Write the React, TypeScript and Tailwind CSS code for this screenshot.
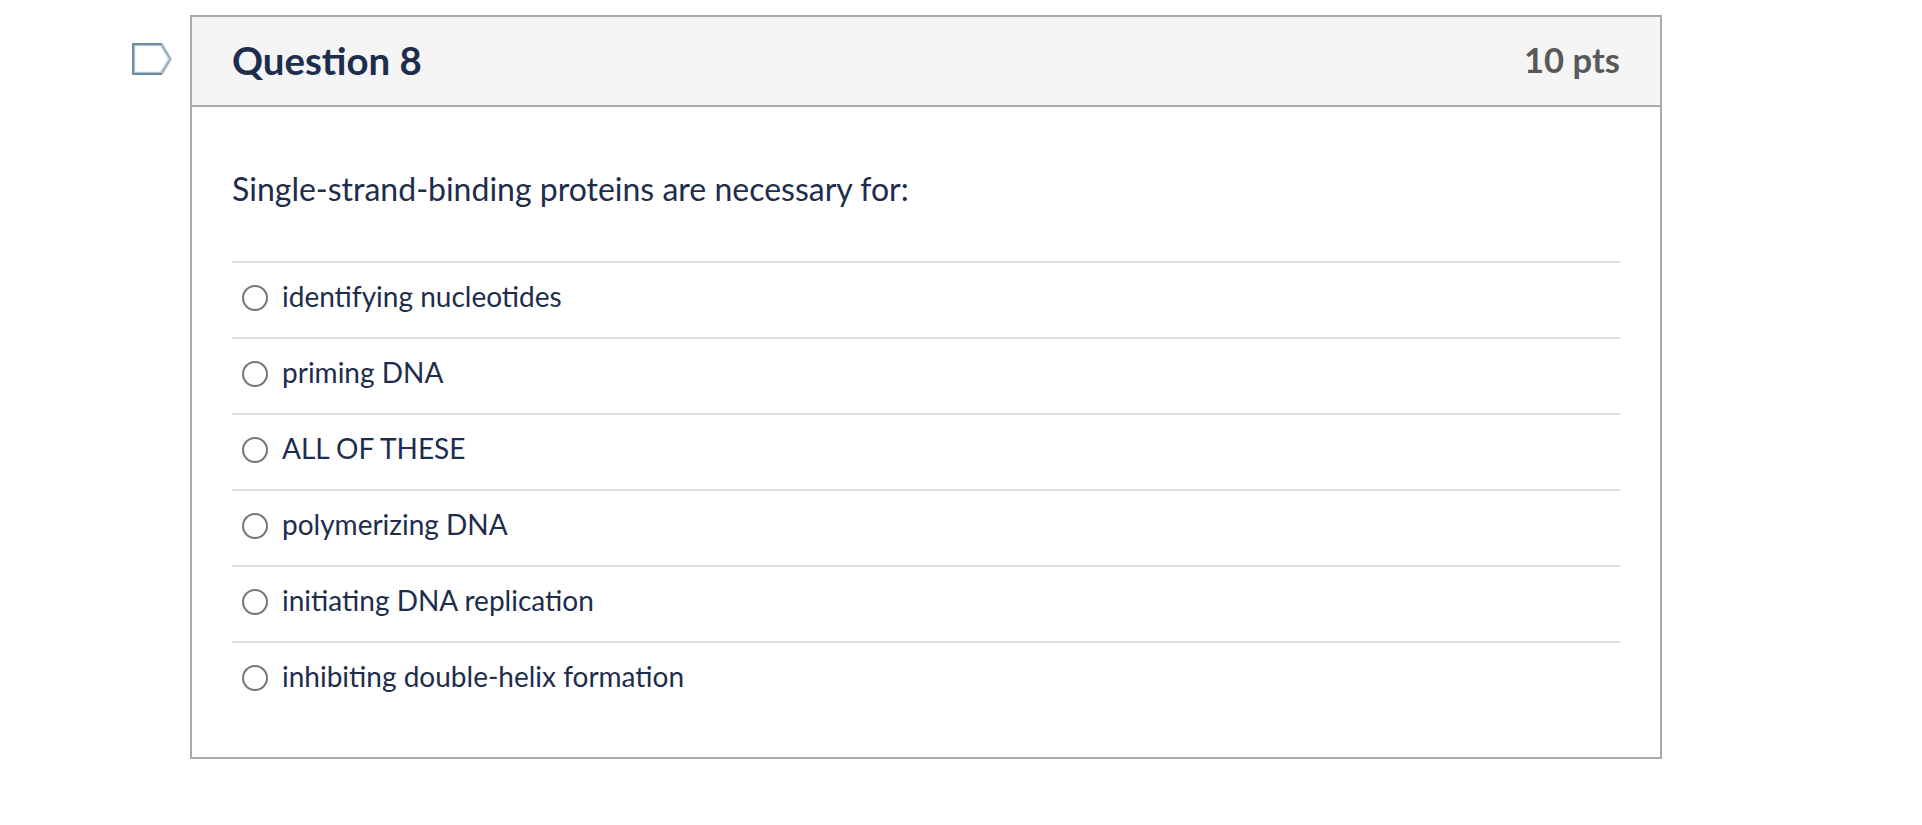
const answers = [
  'identifying nucleotides',
  'priming DNA',
  'ALL OF THESE',
  'polymerizing DNA',
  'initiating DNA replication',
  'inhibiting double-helix formation',
];

function FlagIcon() {
  return (
    <svg className="mt-[28px] h-8 w-10 shrink-0" viewBox="0 0 40 32" fill="none">
      <path d="M29.5 1.5L38 16L29.5 30.5" stroke="#c3d1da" strokeWidth="3.5" />
      <path d="M29.5 1.5L38.5 16L29.5 30.5" stroke="#93abbb" strokeWidth="1.5" />
      <path d="M30 2.5H2.5V29.5H30" stroke="#b4c5d0" strokeWidth="1.5" />
      <path d="M30 1H1V31H30" stroke="#6d8ca2" strokeWidth="2" />
    </svg>
  );
}

export default function App() {
  return (
    <main className="flex min-h-screen items-start gap-[18px] bg-white pt-[15px] pl-[132px] font-['Lato',sans-serif] text-[#1d2d4b]">
      <FlagIcon />

      <section className="h-[744px] w-[1472px] border-2 border-[#aaaaaa]">
        {/* Question header */}
        <div className="flex h-[90px] items-start justify-between border-b-2 border-[#aaaaaa] bg-[#f5f5f5] px-10 pt-5">
          <h2 className="text-[38.4px] leading-[46px] font-bold">Question 8</h2>
          <span className="text-[34.6px] leading-[46px] font-bold text-[#595959]">10 pts</span>
        </div>

        <div className="px-10 pt-[58px]">
          <p className="text-[32px] leading-12">Single-strand-binding proteins are necessary for:</p>

          {/* Answer choices */}
          <div className="mt-[48px]">
            {answers.map((answer) => (
              <label
                key={answer}
                className="flex h-[76px] items-start border-t-2 border-[#dddddd] pt-[22px] pl-[10px]"
              >
                <input
                  type="radio"
                  name="question"
                  className="size-[26px] shrink-0 appearance-none rounded-full border-2 border-[#767676] bg-white"
                />
                <span className="ml-[14px] text-[28px] leading-[22px]">{answer}</span>
              </label>
            ))}
          </div>
        </div>
      </section>
    </main>
  );
}
